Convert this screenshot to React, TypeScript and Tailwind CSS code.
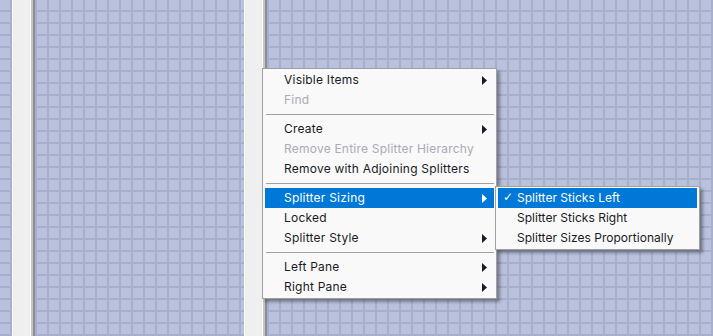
import type { ReactNode } from "react";

type MenuEntry =
  | { label: string; hasSub?: boolean; disabled?: boolean; active?: boolean; checked?: boolean }
  | "separator";

const mainMenu: MenuEntry[] = [
  { label: "Visible Items", hasSub: true },
  { label: "Find", disabled: true },
  "separator",
  { label: "Create", hasSub: true },
  { label: "Remove Entire Splitter Hierarchy", disabled: true },
  { label: "Remove with Adjoining Splitters" },
  "separator",
  { label: "Splitter Sizing", hasSub: true, active: true },
  { label: "Locked" },
  { label: "Splitter Style", hasSub: true },
  "separator",
  { label: "Left Pane", hasSub: true },
  { label: "Right Pane", hasSub: true },
];

const sizingMenu: MenuEntry[] = [
  { label: "Splitter Sticks Left", active: true, checked: true },
  { label: "Splitter Sticks Right" },
  { label: "Splitter Sizes Proportionally" },
];

function GridPane({ className, children }: { className: string; children?: ReactNode }) {
  return (
    <div
      className={`h-full bg-[#b9c1dd] bg-[linear-gradient(90deg,#a8afcc_2px,transparent_2px),linear-gradient(#a8afcc_2px,transparent_2px)] bg-[length:12px_12px] ${className}`}
    >
      {children}
    </div>
  );
}

function SplitterBar() {
  return (
    <div className="flex h-full w-[23px] shrink-0">
      <div className="flex-1 border-l border-[#f9f9f9] bg-[#efefef]" />
      <div className="w-px bg-[#fbfbfb]" />
      <div className="w-[2px] bg-[#c6c6c6]" />
      <div className="w-[2px] bg-[#8d8d8d]" />
    </div>
  );
}

function Arrow() {
  return (
    <svg width="5" height="9" viewBox="0 0 5 9" className="fill-current">
      <path d="M0 0L5 4.5L0 9Z" />
    </svg>
  );
}

function Menu({ entries, className }: { entries: MenuEntry[]; className: string }) {
  return (
    <div
      className={`absolute border border-[#a0a0a0] bg-[#f9f9f9] px-[2px] py-px font-['Inter',sans-serif] text-[12px] shadow-[3px_3px_3px_rgba(0,0,0,0.35)] ${className}`}
    >
      {entries.map((entry, i) =>
        entry === "separator" ? (
          <div key={i} className="flex h-[9px] items-center pl-px">
            <div className="h-px w-full bg-[#a0a0a0]" />
          </div>
        ) : (
          <div
            key={i}
            className={`relative flex h-5 items-center pl-[19px] pr-[7px] ${
              entry.active ? "bg-[#0078d7] text-white" : entry.disabled ? "text-[#aca9b8]" : "text-[#1a1a24]"
            }`}
          >
            {entry.checked ? (
              <span className="absolute left-[5px] top-[3px] font-['DejaVu_Sans',sans-serif] text-[12px] leading-none">✓</span>
            ) : null}
            <span className="flex-1 whitespace-nowrap">{entry.label}</span>
            {entry.hasSub ? <Arrow /> : null}
          </div>
        ),
      )}
    </div>
  );
}

export default function App() {
  return (
    <div className="relative flex h-screen w-full overflow-hidden">
      <GridPane className="w-[12px] shrink-0 bg-[position:10px_10px]" />
      <SplitterBar />
      <GridPane className="w-[209px] shrink-0 bg-[position:0px_10px]" />
      <SplitterBar />
      <GridPane className="flex-1 bg-[position:0px_10px]" />

      <Menu entries={mainMenu} className="left-[262px] top-[68px] w-[235px] tracking-[0.22px]" />
      <Menu entries={sizingMenu} className="left-[495px] top-[186px] w-[205px] tracking-[0.02px]" />
    </div>
  );
}
